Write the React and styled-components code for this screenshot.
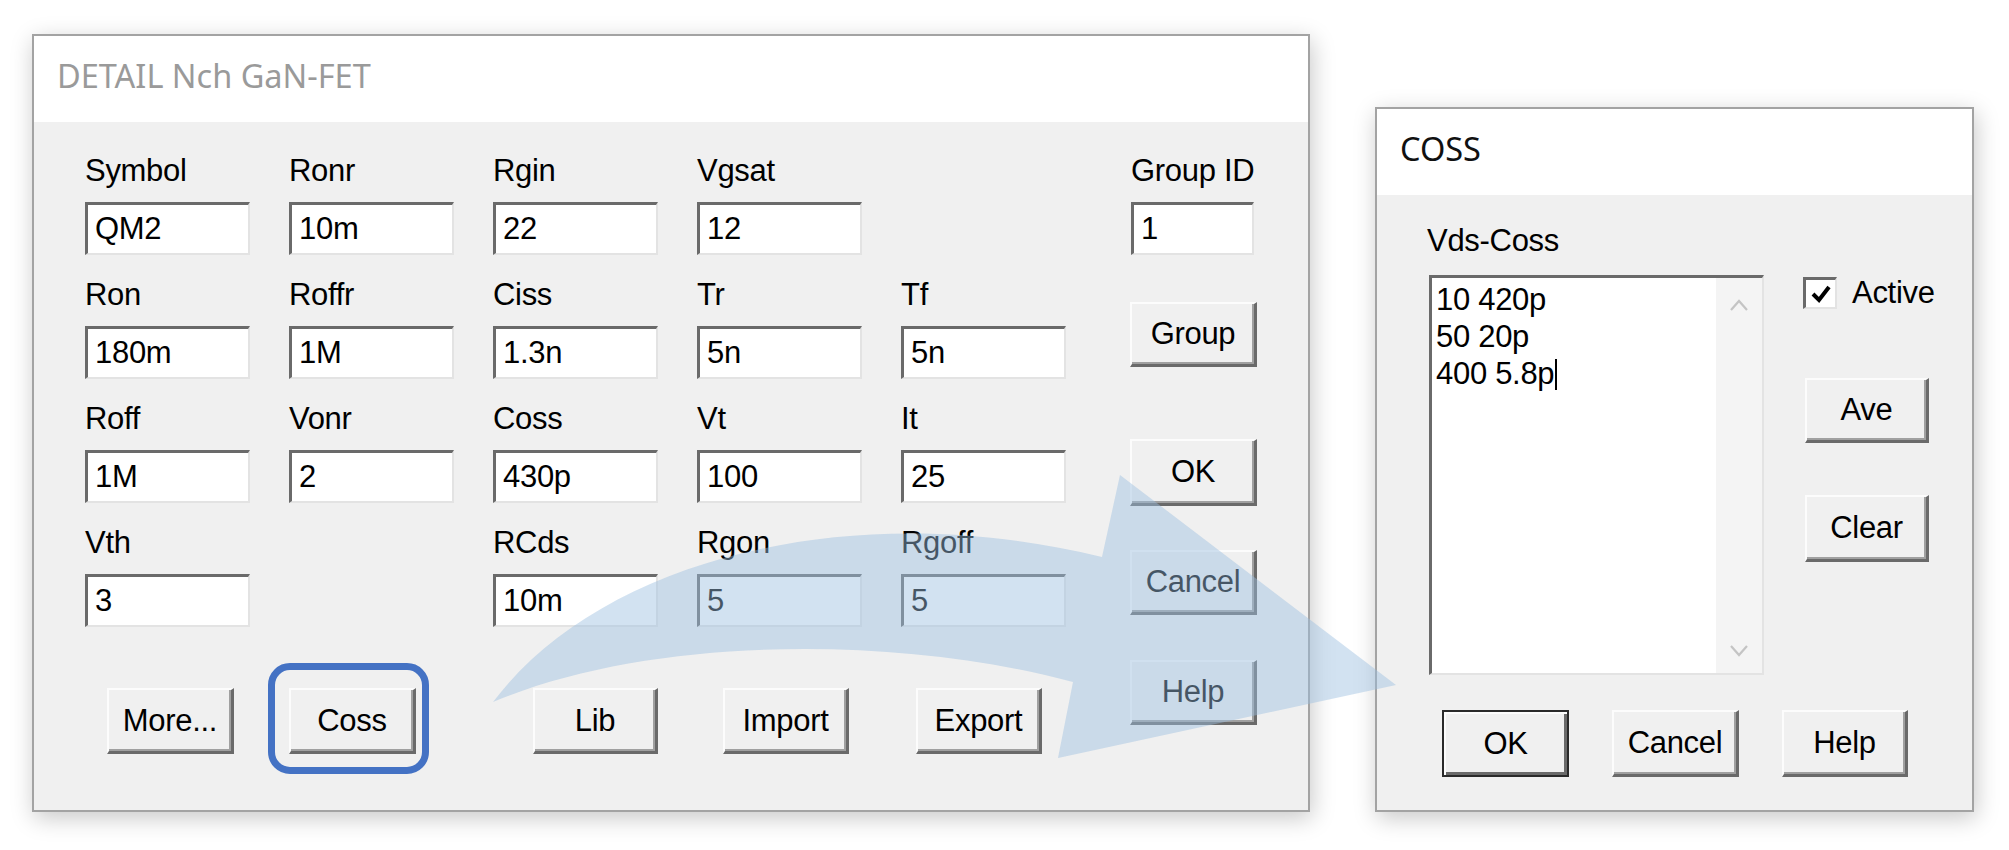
import React from 'react';
import styled, { createGlobalStyle, css } from 'styled-components';

const uiFont = '"Liberation Sans", Arial, sans-serif';

const GlobalStyle = createGlobalStyle`
    html, body {
        margin: 0;
        padding: 0;
        background: #fff;
    }

    body {
        width: 2009px;
        height: 850px;
        overflow: hidden;
        font-family: ${uiFont};
    }
`;

const fields = [
    ['Symbol', 'QM2'], ['Ronr', '10m'], ['Rgin', '22'], ['Vgsat', '12'], null,
    ['Ron', '180m'], ['Roffr', '1M'], ['Ciss', '1.3n'], ['Tr', '5n'], ['Tf', '5n'],
    ['Roff', '1M'], ['Vonr', '2'], ['Coss', '430p'], ['Vt', '100'], ['It', '25'],
    ['Vth', '3'], null, ['RCds', '10m'], ['Rgon', '5'], ['Rgoff', '5'],
];

const cossPoints = ['10 420p', '50 20p', '400 5.8p'];

const Page = styled.main`
    position: relative;
    display: flex;
    align-items: flex-end;
    gap: 65px;
    width: 2009px;
    height: 812px;
    padding: 34px 0 0 32px;
    box-sizing: border-box;
`;

const Window = styled.section`
    display: flex;
    flex-direction: column;
    flex: none;
    width: ${({ $w }) => $w}px;
    height: ${({ $h }) => $h}px;
    box-sizing: border-box;
    border: 2px solid #a3a3a3;
    background: #f0f0f0;
    box-shadow: 2px 6px 22px rgba(0, 0, 0, 0.22);
`;

const TitleBar = styled.header`
    flex: none;
    height: 86px;
    box-sizing: border-box;
    padding: 18px 0 0 23px;
    background: #fff;
    font-family: "Noto Sans", "Open Sans", sans-serif;
    font-size: 32.5px;
    line-height: 44px;
    color: ${({ $active }) => ($active ? '#111' : '#9a9a9a')};
`;

const DetailBody = styled.div`
    display: flex;
    gap: 64px;
    padding: 31px 0 0 51px;
`;

const MainArea = styled.div`
    display: flex;
    flex-direction: column;
`;

const FieldGrid = styled.div`
    display: grid;
    grid-template-columns: repeat(5, 165px);
    column-gap: 39px;
    row-gap: 22px;
`;

const Field = styled.div`
    display: flex;
    flex-direction: column;
    gap: 13px;
    width: ${({ $w }) => $w || 165}px;
    margin-left: ${({ $ml }) => $ml || 0}px;
`;

const Label = styled.label`
    height: 36px;
    font-size: 31px;
    line-height: 36px;
    letter-spacing: -0.3px;
    color: #000;
    white-space: nowrap;
`;

const TextBox = styled.input`
    width: 100%;
    height: 53px;
    box-sizing: border-box;
    margin: 0;
    padding: 0 0 0 7px;
    border-style: solid;
    border-width: 3px 2px 2px 3px;
    border-color: #6a6a6a #e3e3e3 #e3e3e3 #6a6a6a;
    border-radius: 0;
    background: #fff;
    font-family: ${uiFont};
    font-size: 31px;
    letter-spacing: -0.3px;
    color: #000;
    outline: none;
`;

const Button = styled.button`
    flex: none;
    width: ${({ $w }) => $w || 127}px;
    height: ${({ $h }) => $h || 66}px;
    margin: ${({ $mt }) => $mt || 0}px 0 0 ${({ $ml }) => $ml || 0}px;
    padding: 0;
    box-sizing: border-box;
    background: #f0f0f0;
    border-style: solid;
    border-width: 2px 3px 3px 2px;
    border-color: #fcfcfc #6a6a6a #6a6a6a #fcfcfc;
    border-radius: 0;
    box-shadow: inset -2px -2px 0 #a0a0a0;
    font-family: ${uiFont};
    font-size: 31px;
    letter-spacing: -0.3px;
    color: #000;

    ${({ $default }) => $default && css`
        border-width: 2px;
        border-color: #2a2a2a;
        box-shadow: inset 2px 2px 0 #fcfcfc, inset -3px -3px 0 #6a6a6a;
    `}
`;

const ButtonRow = styled.div`
    display: flex;
    align-items: flex-start;
    gap: ${({ $gap }) => $gap || 0}px;
    margin: ${({ $mt }) => $mt}px 0 0 ${({ $ml }) => $ml || 0}px;
`;

const Highlight = styled.div`
    position: relative;
    margin-left: 55px;

    &::after {
        content: '';
        position: absolute;
        top: -25px;
        right: -13px;
        bottom: -20px;
        left: -21px;
        border: 7px solid #4472c4;
        border-radius: 22px;
        pointer-events: none;
    }
`;

const SideColumn = styled.div`
    display: flex;
    flex-direction: column;
    align-items: flex-start;
    margin-top: ${({ $mt }) => $mt || 0}px;
`;

const CossBody = styled.div`
    display: flex;
    flex-direction: column;
    padding: 28px 0 0 50px;
`;

const EditRow = styled.div`
    display: flex;
    gap: 39px;
    margin-top: 16px;
`;

const Memo = styled.div`
    display: flex;
    width: 335px;
    height: 400px;
    margin-left: 2px;
    box-sizing: border-box;
    border-style: solid;
    border-width: 3px 2px 2px 3px;
    border-color: #6a6a6a #e3e3e3 #e3e3e3 #6a6a6a;
    background: #fff;
`;

const MemoText = styled.div`
    flex: 1;
    padding: 3px 0 0 4px;
    font-size: 31px;
    line-height: 37px;
    letter-spacing: -0.3px;
    color: #000;
`;

const Caret = styled.span`
    display: inline-block;
    width: 2px;
    height: 31px;
    margin-left: 1px;
    vertical-align: -6px;
    background: #000;
`;

const ScrollStrip = styled.div`
    display: flex;
    flex-direction: column;
    justify-content: space-between;
    align-items: center;
    width: 46px;
    padding: 20px 0 16px;
    box-sizing: border-box;
    background: #f4f4f4;
`;

const CheckRow = styled.div`
    display: flex;
    align-items: center;
    gap: 15px;
    height: 32px;
    font-size: 31px;
    letter-spacing: -0.3px;
    color: #000;
`;

const CheckBox = styled.span`
    display: flex;
    align-items: center;
    justify-content: center;
    width: 34px;
    height: 32px;
    box-sizing: border-box;
    border-style: solid;
    border-width: 3px 2px 2px 3px;
    border-color: #6a6a6a #e3e3e3 #e3e3e3 #6a6a6a;
    background: #fff;
`;

const ArrowLayer = styled.svg`
    position: absolute;
    top: 0;
    left: 0;
    width: 2009px;
    height: 850px;
    pointer-events: none;
`;

const Chevron = ({ down }) => (
    <svg width="20" height="14" viewBox="0 0 20 14">
        <polyline
            points={down ? '2,3 10,12 18,3' : '2,12 10,3 18,12'}
            fill="none"
            stroke="#c4c4c4"
            strokeWidth="2.2"
        />
    </svg>
);

const DetailDialog = () => (
    <Window $w={1278} $h={778}>
        <TitleBar>DETAIL Nch GaN-FET</TitleBar>
        <DetailBody>
            <MainArea>
                <FieldGrid>
                    {fields.map((f, i) =>
                        f ? (
                            <Field key={f[0]}>
                                <Label>{f[0]}</Label>
                                <TextBox readOnly defaultValue={f[1]} />
                            </Field>
                        ) : (
                            <div key={`blank-${i}`} />
                        ),
                    )}
                </FieldGrid>
                <ButtonRow $mt={61}>
                    <Button $ml={22}>More...</Button>
                    <Highlight>
                        <Button>Coss</Button>
                    </Highlight>
                    <Button $ml={117} $w={125}>Lib</Button>
                    <Button $ml={65} $w={126}>Import</Button>
                    <Button $ml={67} $w={126}>Export</Button>
                </ButtonRow>
            </MainArea>
            <SideColumn>
                <Field $w={123} $ml={1}>
                    <Label>Group ID</Label>
                    <TextBox readOnly defaultValue="1" />
                </Field>
                <Button $mt={47} $h={65}>Group</Button>
                <Button $mt={72} $h={67}>OK</Button>
                <Button $mt={44} $h={65}>Cancel</Button>
                <Button $mt={45} $h={65}>Help</Button>
            </SideColumn>
        </DetailBody>
    </Window>
);

const CossDialog = () => (
    <Window $w={599} $h={705}>
        <TitleBar $active>COSS</TitleBar>
        <CossBody>
            <Label>Vds-Coss</Label>
            <EditRow>
                <Memo>
                    <MemoText>
                        {cossPoints.map((line, i) => (
                            <div key={line}>
                                {line}
                                {i === cossPoints.length - 1 && <Caret />}
                            </div>
                        ))}
                    </MemoText>
                    <ScrollStrip>
                        <Chevron />
                        <Chevron down />
                    </ScrollStrip>
                </Memo>
                <SideColumn $mt={2}>
                    <CheckRow>
                        <CheckBox>
                            <svg width="22" height="20" viewBox="0 0 22 20">
                                <polyline
                                    points="3,10 9,16 19,3"
                                    fill="none"
                                    stroke="#000"
                                    strokeWidth="4"
                                />
                            </svg>
                        </CheckBox>
                        Active
                    </CheckRow>
                    <Button $ml={2} $mt={69} $w={124} $h={65}>Ave</Button>
                    <Button $ml={2} $mt={52} $w={124} $h={67}>Clear</Button>
                </SideColumn>
            </EditRow>
            <ButtonRow $mt={35} $ml={15} $gap={43}>
                <Button $default $h={67}>OK</Button>
                <Button $h={67}>Cancel</Button>
                <Button $h={67} $w={126}>Help</Button>
            </ButtonRow>
        </CossBody>
    </Window>
);

const App = () => (
    <>
        <GlobalStyle />
        <Page>
            <DetailDialog />
            <CossDialog />
            <ArrowLayer viewBox="0 0 2009 850">
                <path
                    d="M493 702 C600 560 850 495 1102 557 L1120 475 L1396 685 L1058 758 L1073 682 C900 635 650 635 493 702 Z"
                    fill="rgba(155, 190, 225, 0.45)"
                />
            </ArrowLayer>
        </Page>
    </>
);

export default App;
